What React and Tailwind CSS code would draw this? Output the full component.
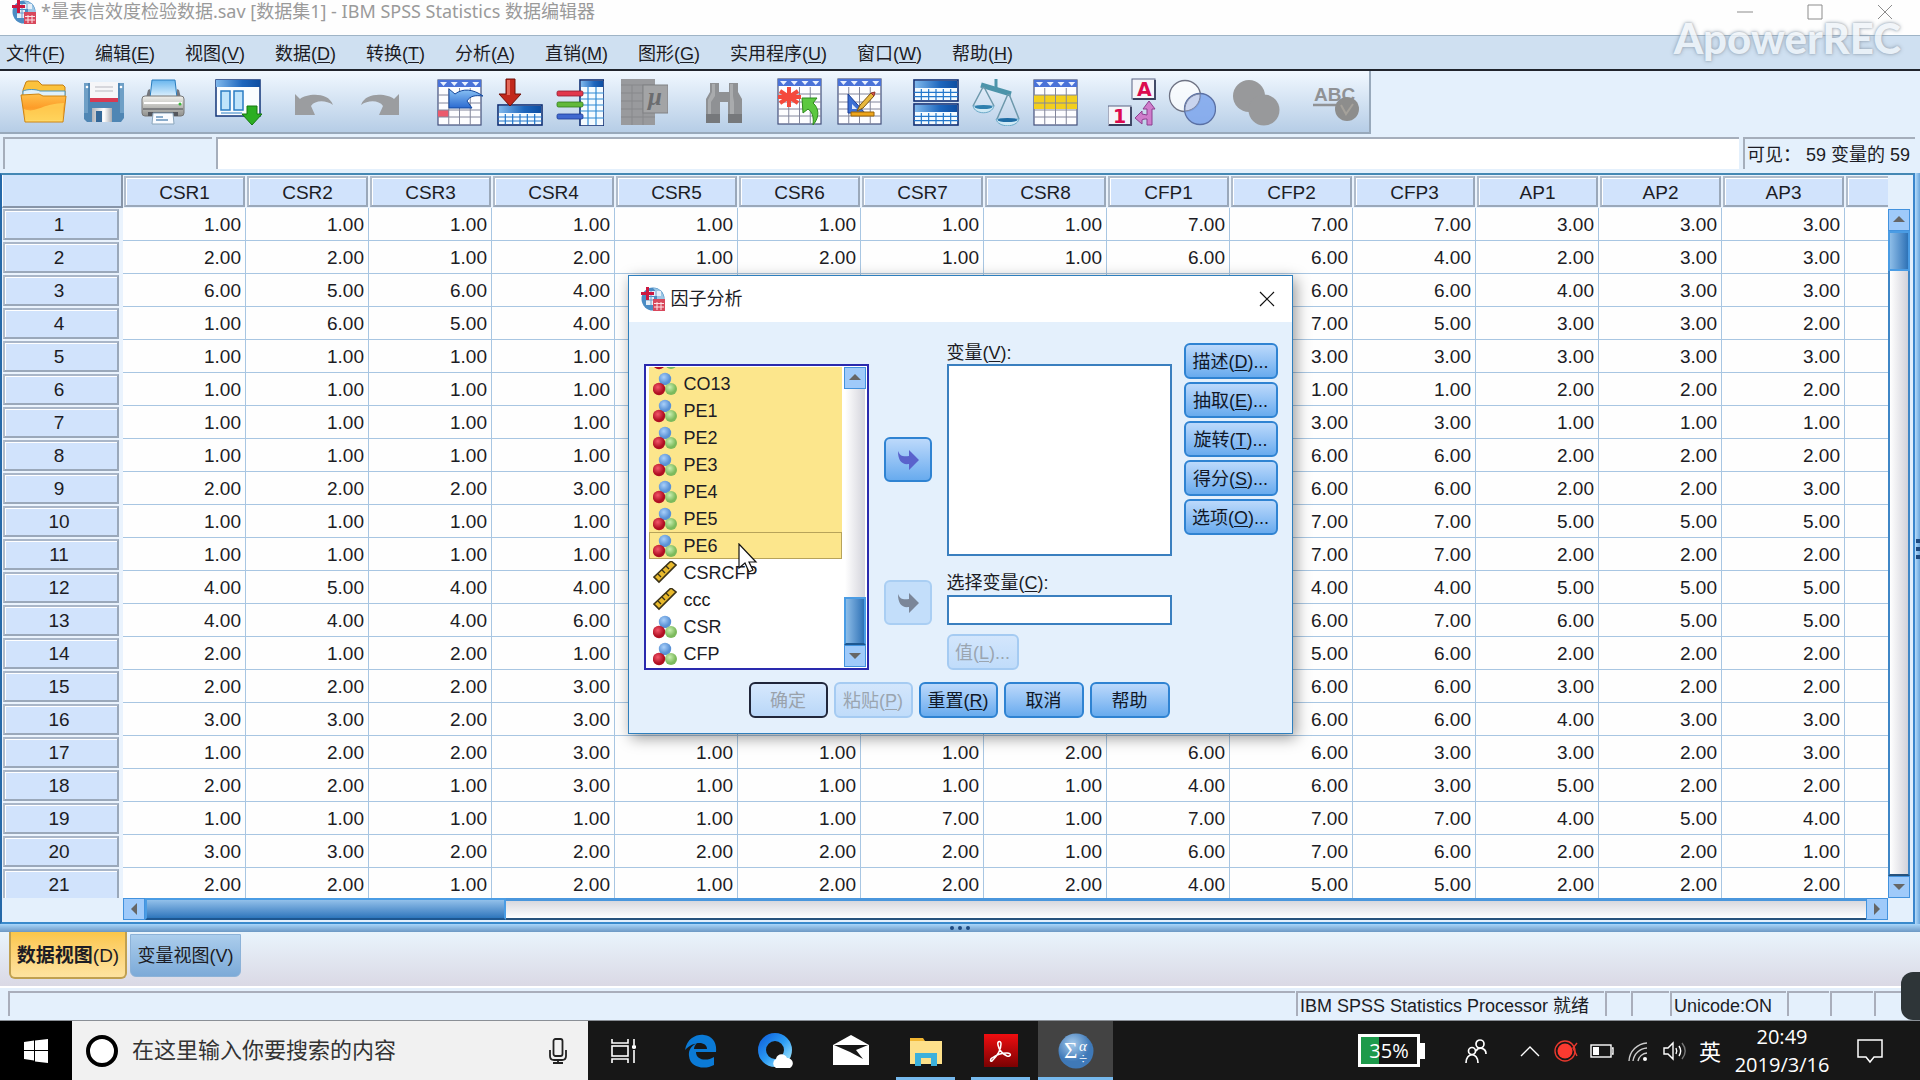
const columns = ["CSR1", "CSR2", "CSR3", "CSR4", "CSR5", "CSR6", "CSR7", "CSR8", "CFP1", "CFP2", "CFP3", "AP1", "AP2", "AP3"]

// null = empty cell
const _ = null
const rows = [
  [1, 1, 1, 1, 1, 1, 1, 1, 7, 7, 7, 3, 3, 3],
  [2, 2, 1, 2, 1, 2, 1, 1, 6, 6, 4, 2, 3, 3],
  [6, 5, 6, 4, _, _, _, _, _, 6, 6, 4, 3, 3],
  [1, 6, 5, 4, _, _, _, _, _, 7, 5, 3, 3, 2],
  [1, 1, 1, 1, _, _, _, _, _, 3, 3, 3, 3, 3],
  [1, 1, 1, 1, _, _, _, _, _, 1, 1, 2, 2, 2],
  [1, 1, 1, 1, _, _, _, _, _, 3, 3, 1, 1, 1],
  [1, 1, 1, 1, _, _, _, _, _, 6, 6, 2, 2, 2],
  [2, 2, 2, 3, _, _, _, _, _, 6, 6, 2, 2, 3],
  [1, 1, 1, 1, _, _, _, _, _, 7, 7, 5, 5, 5],
  [1, 1, 1, 1, _, _, _, _, _, 7, 7, 2, 2, 2],
  [4, 5, 4, 4, _, _, _, _, _, 4, 4, 5, 5, 5],
  [4, 4, 4, 6, _, _, _, _, _, 6, 7, 6, 5, 5],
  [2, 1, 2, 1, _, _, _, _, _, 5, 6, 2, 2, 2],
  [2, 2, 2, 3, _, _, _, _, _, 6, 6, 3, 2, 2],
  [3, 3, 2, 3, _, _, _, _, _, 6, 6, 4, 3, 3],
  [1, 2, 2, 3, 1, 1, 1, 2, 6, 6, 3, 3, 2, 3],
  [2, 2, 1, 3, 1, 1, 1, 1, 4, 6, 3, 5, 2, 2],
  [1, 1, 1, 1, 1, 1, 7, 1, 7, 7, 7, 4, 5, 4],
  [3, 3, 2, 2, 2, 2, 2, 1, 6, 7, 6, 2, 2, 1],
  [2, 2, 1, 2, 1, 2, 2, 2, 4, 5, 5, 2, 2, 2],
]

const menus = [
  ["文件", "F"],
  ["编辑", "E"],
  ["视图", "V"],
  ["数据", "D"],
  ["转换", "T"],
  ["分析", "A"],
  ["直销", "M"],
  ["图形", "G"],
  ["实用程序", "U"],
  ["窗口", "W"],
  ["帮助", "H"],
]

const variables = [
  { name: "CO13", selected: true },
  { name: "PE1", selected: true },
  { name: "PE2", selected: true },
  { name: "PE3", selected: true },
  { name: "PE4", selected: true },
  { name: "PE5", selected: true },
  { name: "PE6", selected: true, focused: true },
  { name: "CSRCFP", scale: true },
  { name: "ccc", scale: true },
  { name: "CSR" },
  { name: "CFP" },
]

function Label({ text, k, after = "" }) {
  return (
    <>
      {text}(<u className="underline-offset-2">{k}</u>){after}
    </>
  )
}

/* ---------- toolbar icons, all in a 48x48 box ---------- */

function Sheet({ x = 2, y = 2, w = 43, h = 45, children }) {
  const cw = w / 4
  return (
    <g>
      <rect x={x} y={y} width={w} height={h} fill="#fdfdff" stroke="#44507c" strokeWidth="1.2" />
      {children}
      <path
        d={`M${x + cw} ${y + 8}V${y + h}M${x + cw * 2} ${y + 8}V${y + h}M${x + cw * 3} ${y + 8}V${y + h}M${x} ${y + 15}H${x + w}M${x} ${y + 23}H${x + w}M${x} ${y + 30}H${x + w}M${x} ${y + 37}H${x + w}`}
        stroke="#82869c"
        strokeWidth="1"
      />
      <rect x={x} y={y} width={w} height="7" fill="#4a72d8" />
      {[0, 1, 2, 3].map((i) => (
        <path key={i} d={`M${x + i * cw + 2} ${y + 2}h7l-3.5 4z`} fill="#e8f0ff" />
      ))}
    </g>
  )
}

function BlueTable({ x, y, w, h }) {
  const cols = [1, 2, 3, 4, 5].map((i) => `M${x + (w * i) / 6} ${y + 9}V${y + h - 1}`).join("")
  const step = (h - 8) / 3
  return (
    <g>
      <rect x={x} y={y} width={w} height={h} fill="#f4fbff" stroke="#0f2f74" strokeWidth="1.6" />
      <path d={`${cols}M${x} ${y + 8 + step}h${w}M${x} ${y + 8 + step * 2}h${w}`} stroke="#2277cc" strokeWidth="1.2" />
      <rect x={x + 1} y={y + 1} width={w - 2} height="7" fill="url(#blueBar)" />
    </g>
  )
}

const icons = {
  open: (
    <>
      <path d="M3 12l3-8 2-1h10l4 4h21l2 2v8H3z" fill="#fbc23c" stroke="#c67e12" />
      <path d="M3 13c4-2 13-2 17 0h25v6H3z" fill="#dff1fb" stroke="#4d94b8" />
      <path d="M1 17l18-1 4 2h23l-3 26H5z" fill="url(#folderFill)" stroke="#cf8410" />
      <path d="M4 31c12 5 16-5 40-6l-2 17H6z" fill="#ffd257" opacity=".8" />
    </>
  ),
  save: (
    <>
      <path d="M4 5h40v35l-3 4H7l-3-3z" fill="#4f86b4" />
      <path d="M4 5h4v30H4zM40 5h4v30h-4z" fill="#6e9fc6" />
      <path d="M10 4h28v20H10z" fill="#f6f6f8" />
      <path d="M15 9h18M15 13h18" stroke="#b8b8c0" />
      <path d="M10 20h28v4H10z" fill="#d83a52" />
      <path d="M12 30h20v14H12z" fill="url(#metal)" />
      <path d="M16 33h6v11h-6z" fill="#346898" />
      <circle cx="7" cy="9" r="1.3" fill="#fff" />
      <circle cx="41" cy="9" r="1.3" fill="#fff" />
    </>
  ),
  print: (
    <>
      <path d="M12 2h23l2 18H10z" fill="url(#paper)" stroke="#2b7dbd" />
      <path d="M8 12l2-1v8h27v-8l2 1 2 8H6z" fill="#74767c" />
      <rect x="2" y="18" width="42" height="20" rx="3" fill="url(#printerFill)" stroke="#777" />
      <path d="M4 25h38" stroke="#fff" strokeWidth="2" />
      <path d="M3 31h40" stroke="#6c6e72" strokeWidth="1.5" />
      <circle cx="40" cy="26" r="1.5" fill="#3cb53c" />
      <path d="M8 34h30v4H8z" fill="#55585e" />
      <path d="M13 35h20l1 11H12z" fill="#f8fbff" stroke="#8aa5bb" />
      <path d="M16 39h7M16 42h12" stroke="#1c5f98" />
    </>
  ),
  recall: (
    <>
      <rect x="2" y="2" width="44" height="36" fill="#fafdff" stroke="#123478" strokeWidth="1.5" />
      <rect x="2" y="2" width="44" height="7" fill="url(#blueBar)" />
      <rect x="7" y="13" width="9" height="19" fill="#bfe4fb" stroke="#2a7cc4" strokeWidth="1.5" />
      <rect x="20" y="13" width="9" height="19" fill="#bfe4fb" stroke="#2a7cc4" strokeWidth="1.5" />
      <path d="M7 35h21" stroke="#2a7cc4" />
      <path d="M33 28h10v8h5L38 47 28 36h5z" fill="#2cae22" stroke="#14780f" />
    </>
  ),
  undo: <path d="M5 16l5 5c6-5 28-8 33 6-7-5-18-5-22 1l4 9H5z" fill="#9b9da0" />,
  redo: <path d="M43 16l-5 5c-6-5-28-8-33 6 7-5 18-5 22 1l-4 9h20z" fill="#9b9da0" />,
  gotoCase: (
    <>
      <Sheet>
        <rect x="2" y="32" width="11" height="7" fill="#ec5a6c" />
      </Sheet>
      <path d="M13 30V11l6 5c8-6 18-5 28 2-8-1-13 0-16 5l5 7z" fill="url(#blueArrow)" stroke="#16489c" />
    </>
  ),
  gotoVar: (
    <>
      <BlueTable x={2} y={27} w={44} h={20} />
      <path d="M10 1h9v15h6L14 28 3 16h7z" fill="#c2281c" stroke="#701008" />
      <path d="M11 2h3v15h-3z" fill="#e4695a" />
    </>
  ),
  variables: (
    <>
      <rect x="24" y="2" width="24" height="46" fill="#f4fbff" stroke="#0f2f74" strokeWidth="1.6" />
      <path d="M32 9v38M40 9v38M24 15h24M24 21h24M24 27h24M24 33h24M24 40h24" stroke="#2f8ad4" strokeWidth="1.2" />
      <rect x="25" y="3" width="22" height="6" fill="url(#blueBar)" />
      <rect x="1" y="13" width="26" height="5" rx="1.5" fill="#e2384c" stroke="#8f1c30" strokeWidth=".8" />
      <rect x="1" y="24" width="26" height="5" rx="1.5" fill="#62b93a" stroke="#2f7a1a" strokeWidth=".8" />
      <rect x="1" y="36" width="26" height="5" rx="1.5" fill="#4068cf" stroke="#1c3a94" strokeWidth=".8" />
    </>
  ),
  stats: (
    <>
      <path d="M1 1h34v46H1z" fill="#999a9d" />
      <path d="M1 7h34M1 15h34M1 23h34M1 31h34M1 39h34M12 7v40M23 7v40" stroke="#87888b" />
      <rect x="23" y="7" width="25" height="28" fill="#a3a4a6" stroke="#808184" />
      <text x="28" y="27" fontSize="25" fontStyle="italic" fontWeight="bold" fill="#6b6c6f" fontFamily="Liberation Serif, serif">μ</text>
    </>
  ),
  find: (
    <>
      <path d="M10 5h9v9h10V5h9v9l4 7v24H28V24h-8v21H6V21l4-7z" fill="#8f9194" />
      <path d="M12 6h3v12l-4 6v12H8V22l4-8zM30 6h3v12l1 6v12h-4z" fill="#a9abad" />
      <path d="M6 36h14v9H6zM28 36h14v9H28z" fill="#76787b" />
    </>
  ),
  insertCase: (
    <>
      <Sheet y={1} />
      <path d="M13 9v20M4 13l18 12M22 13L4 25M2 19h23" stroke="#f4493c" strokeWidth="4" />
      <path d="M26 20h15l-4 5c6 5 7 14 0 22 1-9-1-13-5-16l-5 4z" fill="#5cc840" stroke="#2d8a1c" />
    </>
  ),
  insertVar: (
    <>
      <Sheet y={1} />
      <path d="M12 16v19h17z" fill="#3b6fd4" stroke="#1b3d94" />
      <path d="M16 26v5h5z" fill="#dfe9fa" />
      <path d="M21 33l3-6 11-12 3 3-11 12z" fill="#e8b83c" stroke="#7a5510" />
      <path d="M35 15l3 3 1-4z" fill="#d8584a" stroke="#903428" />
      <path d="M15 34h23v4H15z" fill="#eda51c" stroke="#9a6408" />
    </>
  ),
  split: (
    <>
      <BlueTable x={2} y={2} w={44} h={21} />
      <BlueTable x={2} y={26} w={44} h={21} />
    </>
  ),
  weight: (
    <g fill="none">
      <path d="M24 1v10" stroke="#4c94aa" strokeWidth="3" />
      <path d="M9 7l30 9" stroke="#4c94aa" strokeWidth="5" />
      <path d="M11 9L1 28M12 9l10 19M36 16L25 41M37 16l10 25" stroke="#6d98ab" strokeWidth="1.5" />
      <path d="M1 28h21c-2 9-19 9-21 0z" fill="#cfe9f5" stroke="#6aa9c8" />
      <path d="M24 41h23c-2 9-21 9-23 0z" fill="#cfe9f5" stroke="#6aa9c8" />
      <ellipse cx="11.500" cy="29" rx="9" ry="2" fill="#2e7fae" />
      <ellipse cx="35.500" cy="42" rx="10" ry="2" fill="#1f6ca4" />
    </g>
  ),
  select: (
    <Sheet>
      <rect x="2" y="17" width="43" height="14" fill="#f2cf1e" />
    </Sheet>
  ),
  labels: (
    <>
      <rect x="24" y="1" width="23" height="20" fill="#f4f5fa" stroke="#5a6484" />
      <path d="M25 21h22V2" stroke="#39415e" strokeWidth="1.8" fill="none" />
      <text x="29" y="18" fontSize="19" fontWeight="bold" fill="#dc0a50" fontFamily="DejaVu Sans, sans-serif">A</text>
      <rect x="0" y="28" width="23" height="20" fill="#f4f5fa" stroke="#5a6484" />
      <path d="M1 47h22V29" stroke="#39415e" strokeWidth="1.8" fill="none" />
      <text x="5" y="45" fontSize="19" fontWeight="bold" fill="#dc0a50" fontFamily="DejaVu Sans, sans-serif">1</text>
      <path d="M41 23l6 8h-3v16h-5v-6c-2 0-4 0-5 1v4l-7-6 7-7v3l5 1v-6h-4z" fill="#cf7ccb" stroke="#8b3f8e" />
    </>
  ),
  sets: (
    <>
      <circle cx="17" cy="18" r="15.500" fill="#fff" fillOpacity=".75" stroke="#6f7384" strokeWidth="1.3" />
      <circle cx="32" cy="31" r="15.500" fill="#7ea6ec" fillOpacity=".85" stroke="#5a70a4" strokeWidth="1.3" />
      <path d="M32 16a15.500 15.500 0 01-15 17 15.500 15.500 0 0115-17z" fill="#c9d4ee" stroke="#7b84a0" />
    </>
  ),
  allVars: (
    <>
      <circle cx="17" cy="18" r="16" fill="#98999b" />
      <circle cx="32" cy="32" r="15.500" fill="#98999b" />
    </>
  ),
  spell: (
    <>
      <text x="2" y="23" fontSize="19" fontWeight="bold" fill="#909295" fontFamily="Liberation Sans, sans-serif">ABC</text>
      <path d="M1 27h26" stroke="#909295" strokeWidth="2.500" />
      <circle cx="35" cy="31" r="12" fill="#8d8d8c" />
      <path d="M29 27l5 9 7-10" fill="none" stroke="#a5a19a" strokeWidth="2" />
    </>
  ),
}

function IconDefs() {
  return (
    <svg className="absolute size-0" aria-hidden="true">
      <defs>
        <linearGradient id="blueBar">
          <stop offset="0" stopColor="#7fb8ec" />
          <stop offset=".6" stopColor="#1d66bd" />
          <stop offset="1" stopColor="#0e4ea2" />
        </linearGradient>
        <linearGradient id="folderFill" x2="0" y2="1">
          <stop offset="0" stopColor="#ffc04a" />
          <stop offset=".5" stopColor="#fd9c28" />
          <stop offset="1" stopColor="#ffdf70" />
        </linearGradient>
        <linearGradient id="metal">
          <stop offset="0" stopColor="#b0b4ba" />
          <stop offset=".6" stopColor="#fff" />
          <stop offset="1" stopColor="#a8acb2" />
        </linearGradient>
        <linearGradient id="paper" x2="0" y2="1">
          <stop offset="0" stopColor="#69b6ee" />
          <stop offset="1" stopColor="#e8f6ff" />
        </linearGradient>
        <linearGradient id="printerFill" x2="0" y2="1">
          <stop offset="0" stopColor="#f0f0ec" />
          <stop offset="1" stopColor="#8f908d" />
        </linearGradient>
        <linearGradient id="blueArrow" x2="0" y2="1">
          <stop offset="0" stopColor="#8cc4f6" />
          <stop offset="1" stopColor="#2b6ad0" />
        </linearGradient>
        <linearGradient id="acrobat" x2="0" y2="1">
          <stop offset="0" stopColor="#f00d10" />
          <stop offset="1" stopColor="#7a0203" />
        </linearGradient>
        <radialGradient id="sigma" cx=".4" cy=".3">
          <stop offset="0" stopColor="#a6cbec" />
          <stop offset="1" stopColor="#3f79b8" />
        </radialGradient>
        <radialGradient id="ballBlue" cx=".4" cy=".35">
          <stop offset="0" stopColor="#a9d0fa" />
          <stop offset="1" stopColor="#5a92d6" />
        </radialGradient>
        <radialGradient id="ballRed" cx=".4" cy=".35">
          <stop offset="0" stopColor="#f3566a" />
          <stop offset="1" stopColor="#b00f22" />
        </radialGradient>
        <radialGradient id="ballGreen" cx=".4" cy=".35">
          <stop offset="0" stopColor="#c9efb0" />
          <stop offset="1" stopColor="#7cba5c" />
        </radialGradient>
        <linearGradient id="qRing" x2="1" y2="1">
          <stop offset="0" stopColor="#1267e0" />
          <stop offset=".5" stopColor="#2b9cf4" />
          <stop offset="1" stopColor="#9be0fb" />
        </linearGradient>
      </defs>
    </svg>
  )
}

function Tool({ icon, label }) {
  return (
    <button aria-label={label} className="w-[60px] h-full flex items-center justify-center">
      <svg viewBox="0 0 48 48" className="size-12">{icons[icon]}</svg>
    </button>
  )
}

function SpssLogo() {
  return (
    <svg viewBox="0 0 24 24" className="size-6 shrink-0">
      <circle cx="12" cy="12" r="11.500" fill="#4b8cc4" />
      <path d="M12 1a11 11 0 0111 11h-7V6z" fill="#9cc7e6" />
      <path d="M6 4h14v5H6zM5 10h8v8H5z" fill="#e6eff8" />
      <path d="M10 4v14M5 13h8M15 4v5" stroke="#6d9cc8" />
      <path d="M5 0h3v5h5v3H8v5H5V8H0V5h5z" fill="#cc1840" />
      <rect x="12" y="12" width="12" height="12" fill="#d8485c" />
      <path d="M13 16.500h10M13 20h10M16 15v8M20 15v8" stroke="#fbe4e8" />
    </svg>
  )
}

function NominalIcon() {
  return (
    <svg viewBox="0 0 24 24" className="size-6 shrink-0">
      <circle cx="12" cy="7" r="6.200" fill="url(#ballBlue)" />
      <circle cx="18" cy="17" r="6" fill="url(#ballGreen)" />
      <circle cx="6" cy="17" r="6.200" fill="url(#ballRed)" />
    </svg>
  )
}

function ScaleIcon() {
  return (
    <svg viewBox="0 0 24 24" className="size-6 shrink-0">
      <path d="M1 16L18 0l5 4L6 21z" fill="#e8b92c" stroke="#3c3318" strokeWidth="1.600" />
      <path d="M5 13l3 3M9 9l3 3M13 5l3 3" stroke="#3c3318" strokeWidth="1.400" />
    </svg>
  )
}

/* ---------- scroll bars ---------- */

const triangles = {
  up: "M1 9l6-6 6 6z",
  down: "M1 4h12L7 10z",
  left: "M10 1v12L4 7z",
  right: "M4 1v12l6-6z",
}

function ScrollButton({ dir }) {
  return (
    <button aria-label={dir} className="size-[22px] shrink-0 flex items-center justify-center bg-[#9fcafa] border border-[#4292de]">
      <svg viewBox="0 0 14 14" className="size-3.5">
        <path d={triangles[dir]} fill="#666" />
      </svg>
    </button>
  )
}

/* ---------- factor analysis dialog ---------- */

function DialogButton({ children, disabled, primary, className = "" }) {
  const tone = primary
    ? "border-[#20263a] bg-linear-to-b from-[#d6e8fd] to-[#b9d7f8] text-[#9aa2ab]"
    : disabled
      ? "border-[#a5cbf2] bg-linear-to-b from-[#d3e6fc] to-[#c0dcfa] text-[#9aa5b0]"
      : "border-[#2f83d2] bg-linear-to-b from-[#bcd9fb] to-[#68abee] text-[#101828]"
  return (
    <button disabled={disabled} className={`h-9 pt-[3px] rounded-md border-2 text-lg leading-[29px] whitespace-nowrap ${tone} ${className}`}>
      {children}
    </button>
  )
}

function MoveButton({ disabled }) {
  return (
    <button
      disabled={disabled}
      aria-label="移动"
      className={
        disabled
          ? "w-12 h-[45px] rounded-md border-2 border-[#a9cef3] bg-[#c3defa] flex items-center justify-center"
          : "w-12 h-[45px] rounded-md border-2 border-[#2f83d2] bg-linear-to-b from-[#bcd9fb] to-[#68abee] flex items-center justify-center"
      }
    >
      <svg viewBox="0 0 22 20" className="w-[22px] h-5">
        <path d="M1 1c2 5 5 6 11 5V0l10 10-10 10v-6C5 15 1 11 1 1z" fill={disabled ? "#7b8698" : "#5a62cc"} />
      </svg>
    </button>
  )
}

function FactorDialog() {
  return (
    <section
      role="dialog"
      aria-label="因子分析"
      className="relative w-[665px] border border-[#2f7fbd] bg-[#e4f0fc] shadow-[3px_4px_14px_rgba(0,0,0,0.4)]"
    >
      <header className="h-[46px] bg-white flex items-center pl-3 pr-[17px]">
        <SpssLogo />
        <h2 className="ml-1.5 text-lg">因子分析</h2>
        <button aria-label="关闭" className="ml-auto">
          <svg viewBox="0 0 16 16" className="size-4">
            <path d="M1 1l14 14M15 1L1 15" stroke="#111" strokeWidth="1.200" />
          </svg>
        </button>
      </header>

      <div className="flex pl-[15px] pr-[14px]">
        {/* source variables */}
        <div className="mt-[42px] h-[306px] w-[225px] border-2 border-[#2a2aae] bg-white flex">
          <ul role="listbox" aria-multiselectable="true" className="flex-1 ml-[3px] mt-px mr-0.5">
            {/* tail of the row scrolled out above */}
            <li aria-hidden="true" className="h-[3px] pl-1 overflow-hidden flex items-end bg-[#fce68c]">
              <NominalIcon />
            </li>
            {variables.map((v) => (
              <li
                key={v.name}
                role="option"
                aria-selected={!!v.selected}
                className={`h-[27px] pl-[3px] flex items-center gap-[7px] text-lg border ${v.selected ? "bg-[#fce68c]" : "bg-white"} ${v.focused ? "border-[#b7a35a]" : "border-transparent"}`}
              >
                {v.scale ? <ScaleIcon /> : <NominalIcon />}
                {v.name}
              </li>
            ))}
          </ul>
          <div className="flex flex-col w-[22px] mr-px my-px">
            <ScrollButton dir="up" />
            <div className="h-[208px] mx-px bg-linear-to-r from-white to-[#d4d4dc]" />
            <div className="flex-1 border-2 border-[#4a9ce4] border-b-[#1d5791] bg-linear-to-r from-[#8dbde8] to-[#2d72b6]" />
            <ScrollButton dir="down" />
          </div>
        </div>

        <div className="ml-[15px] pt-[115px] flex flex-col gap-[98px]">
          <MoveButton />
          <MoveButton disabled />
        </div>

        <div className="ml-[15px] pt-[21px] w-[225px] flex flex-col">
          <label htmlFor="target" className="text-lg leading-[21px]">
            <Label text="变量" k="V" after=":" />
          </label>
          <select id="target" multiple className="h-48 w-full appearance-none bg-white border-2 border-[#3a7fbf]" />
          <label htmlFor="selection" className="mt-4 text-lg leading-[23px]">
            <Label text="选择变量" k="C" after=":" />
          </label>
          <input id="selection" type="text" className="h-[30px] w-full bg-white border-2 border-[#3a7fbf] px-1 text-lg" />
          <DialogButton disabled className="mt-[9px] w-[72px]">
            <Label text="值" k="L" after="..." />
          </DialogButton>
        </div>

        <div className="ml-3 pt-[21px] flex-1 flex flex-col gap-[3px]">
          {[["描述", "D"], ["抽取", "E"], ["旋转", "T"], ["得分", "S"], ["选项", "O"]].map(([text, k]) => (
            <DialogButton key={k}>
              <Label text={text} k={k} after="..." />
            </DialogButton>
          ))}
        </div>
      </div>

      <div className="flex justify-center gap-1.5 pt-3 pb-[15px] pr-0.5">
        <DialogButton disabled primary className="w-[79px]">确定</DialogButton>
        <DialogButton disabled className="w-[79px]"><Label text="粘贴" k="P" /></DialogButton>
        <DialogButton className="w-[79px]"><Label text="重置" k="R" /></DialogButton>
        <DialogButton className="w-20">取消</DialogButton>
        <DialogButton className="w-20">帮助</DialogButton>
      </div>

      {/* mouse pointer */}
      <svg viewBox="0 0 20 30" className="absolute left-[109px] top-[267px] w-5 h-[30px]">
        <path d="M1 1v24l6-5 4 9 4-2-4-8h7z" fill="#fff" stroke="#111" strokeWidth="1.200" />
      </svg>
    </section>
  )
}

/* ---------- taskbar ---------- */

function TaskApp({ label, running, active, children }) {
  return (
    <button
      aria-label={label}
      className={`relative w-[75px] h-full flex items-center justify-center ${active ? "bg-[#434343]" : ""}`}
    >
      <svg viewBox="0 0 36 36" className="size-9">{children}</svg>
      {running && <span className="absolute bottom-0 inset-x-2 h-[3px] bg-[#76b9ed]" />}
      {active && <span className="absolute bottom-0 inset-x-0 h-[3px] bg-[#76b9ed]" />}
    </button>
  )
}

function TrayIcon({ label, children }) {
  return (
    <button aria-label={label} className="w-9 flex items-center justify-center">
      <svg viewBox="0 0 24 24" className="size-6" fill="none" stroke="#fff" strokeWidth="1.400">{children}</svg>
    </button>
  )
}

function Taskbar() {
  return (
    <footer className="h-[59px] bg-[#171717] text-white flex items-stretch">
      <button aria-label="开始" className="w-[72px] bg-black flex items-center justify-center">
        <svg viewBox="0 0 24 24" className="size-6" fill="#fff">
          <path d="M0 3l10-1.500V11H0zM11 1.400L24 0v11H11zM0 12h10v9.500L0 20zM11 12h13v12l-13-1.600z" />
        </svg>
      </button>
      <label className="w-[516px] bg-[#f1f1f1] flex items-center pl-[13px] pr-5">
        <svg viewBox="0 0 34 34" className="size-[34px]">
          <circle cx="17" cy="17" r="14" fill="#fff" stroke="#000" strokeWidth="4" />
        </svg>
        <input
          type="text"
          aria-label="搜索"
          placeholder="在这里输入你要搜索的内容"
          className="ml-[13px] flex-1 min-w-0 bg-transparent text-[22px] placeholder:text-[#333] outline-none"
        />
        <svg viewBox="0 0 20 26" className="w-5 h-[26px]" fill="none" stroke="#222" strokeWidth="1.800">
          <rect x="5.500" y="1" width="9" height="17" rx="2" />
          <path d="M2 12v6c0 3 2 4 4 4h8c2 0 4-1 4-4v-6M10 22v3M5 25h10" />
        </svg>
      </label>
      <button aria-label="任务视图" className="w-[72px] mr-[3px] flex items-center justify-center">
        <svg viewBox="0 0 28 26" className="w-7 h-[26px]" fill="none" stroke="#fff" strokeWidth="1.600">
          <path d="M2 1v4h16V1M2 25v-4h16v4" />
          <rect x="2" y="8" width="16" height="10" />
          <path d="M24 1v6M24 12v13M24 7v4" />
          <path d="M22 9h4" strokeWidth="3" />
        </svg>
      </button>

      <TaskApp label="Edge">
        <path d="M2 17C4 5 14 1 21 2c9 1 13 8 12 17H13c0 9 12 9 18 5v8c-9 5-24 3-25-9-1-7 4-11 8-13-2 2-3 4-3 6h13c0-7-12-9-22 1z" fill="#0b7ad6" />
      </TaskApp>
      <TaskApp label="QQ浏览器">
        <circle cx="17" cy="17" r="13" fill="none" stroke="url(#qRing)" strokeWidth="8" />
        <path d="M18 35a5 5 0 010-9c1-6 9-6 11-1 6 0 8 7 3 10z" fill="#fff" />
      </TaskApp>
      <TaskApp label="邮件">
        <path d="M0 12L18 2l18 10v20H0z" fill="#fff" />
        <path d="M1 12h34L23 17l7 9-13-7z" fill="#171717" />
      </TaskApp>
      <TaskApp label="文件资源管理器" running>
        <path d="M2 5h13l2 3H2z" fill="#f2b632" />
        <path d="M2 8h32v23H2z" fill="#fde08a" />
        <path d="M7 33V20h22v13h-6v-8h-10v8z" fill="#3cb0dc" />
      </TaskApp>
      <TaskApp label="Acrobat" running>
        <rect x="1" y="1" width="34" height="33" fill="url(#acrobat)" />
        <path d="M9 28c3-3 9-9 9-17 0-4-4-3-3 1 1 5 5 9 9 11 4 1 5-3 0-3-5 0-11 2-15 5-2 1-2 4 0 3z" fill="none" stroke="#fff" strokeWidth="1.500" />
      </TaskApp>
      <TaskApp label="SPSS" active>
        <circle cx="18" cy="18" r="17.500" fill="url(#sigma)" />
        <text x="6" y="25" fontSize="23" fill="#fff" fontFamily="Liberation Serif, serif">Σ</text>
        <text x="21" y="18" fontSize="15" fontStyle="italic" fill="#fff" fontFamily="Liberation Serif, serif">α</text>
        <text x="21" y="31" fontSize="15" fill="#fff" fontFamily="Liberation Serif, serif">÷</text>
      </TaskApp>

      {/* tray */}
      <div className="ml-auto flex items-stretch pr-4">
        <div className="flex items-center mr-[15px]">
          <div className="relative w-[62px] h-[33px] border-[3px] border-white bg-[#151515] bg-linear-to-r from-[#1d9a4b] from-33% to-[#151515] to-33% flex items-center justify-center">
            <span className="text-xl font-['Open_Sans']">35%</span>
          </div>
          <span className="w-[5px] h-4 bg-white" />
        </div>
        <button aria-label="人脉" className="w-[72px] flex items-center justify-center">
          <svg viewBox="0 0 24 26" className="w-6 h-[26px]" fill="none" stroke="#fff" strokeWidth="1.700">
            <circle cx="16" cy="6" r="4" />
            <circle cx="8" cy="13" r="3.500" />
            <path d="M2 25c0-11 12-11 12 0M12 13c3-5 10-3 10 3" />
          </svg>
        </button>
        <TrayIcon label="显示隐藏的图标"><path d="M3 17l9-9 9 9" /></TrayIcon>
        <TrayIcon label="录屏">
          <circle cx="11" cy="12" r="10" stroke="#e8392e" />
          <circle cx="11" cy="12" r="7.500" fill="#fb3a30" stroke="none" />
          <path d="M23 4l-4 5 4 8" stroke="#e8392e" />
        </TrayIcon>
        <TrayIcon label="电池">
          <rect x="1" y="6" width="20" height="12" />
          <path d="M22 9h1v6h-1" />
          <rect x="3" y="8" width="6" height="8" fill="#fff" stroke="none" />
        </TrayIcon>
        <TrayIcon label="网络">
          <path d="M3 22A19 19 0 0121 4M7 22A15 15 0 0121 9M12 22a10 10 0 019-8" stroke="#ccc" />
          <circle cx="19" cy="20" r="2" fill="#fff" stroke="none" />
        </TrayIcon>
        <TrayIcon label="音量">
          <path d="M2 9h4l5-5v16l-5-5H2z" />
          <path d="M14 9c1 2 1 4 0 6M17 7c2 3 2 7 0 10" />
          <path d="M20 4c4 5 4 11 0 16" stroke="#777" />
        </TrayIcon>
        <button className="w-9 text-[22px] font-['Noto_Sans_CJK_SC']">英</button>
        <div className="w-[108px] flex flex-col justify-center text-center text-xl leading-7 font-['Open_Sans',sans-serif]">
          <time>20:49</time>
          <time>2019/3/16</time>
        </div>
        <button aria-label="通知" className="w-[68px] flex items-center justify-center">
          <svg viewBox="0 0 26 26" className="size-[26px]" fill="none" stroke="#fff" strokeWidth="1.500">
            <path d="M1 2h24v17h-8l-4 5-4-5H1z" />
          </svg>
        </button>
      </div>
    </footer>
  )
}

function App() {
  return (
    <div className="relative min-h-screen flex flex-col overflow-hidden bg-[#e4f0fc] text-[#1c1c24] font-['Liberation_Sans','Noto_Sans_CJK_SC',sans-serif]">
      <IconDefs />

      {/* title bar */}
      <header className="h-[35px] bg-[#fefefe] flex items-start pl-3 text-[#9a9a9a]">
        <SpssLogo />
        <h1 className="ml-[5px] text-lg leading-[22px] font-['Noto_Sans','Noto_Sans_CJK_SC',sans-serif]">
          *量表信效度检验数据.sav [数据集1] - IBM SPSS Statistics 数据编辑器
        </h1>
        <div className="ml-auto flex gap-[54px] pt-1 pr-[27px]">
          {["M0 8h16", "M1 1h14v14H1z", "M1 1l14 14M15 1L1 15"].map((d) => (
            <button key={d} aria-label="窗口按钮">
              <svg viewBox="0 0 16 16" className="size-4">
                <path d={d} fill="none" stroke="#8c8c8c" />
              </svg>
            </button>
          ))}
        </div>
      </header>

      {/* menu */}
      <nav className="h-9 pt-0.5 bg-[#cfe0f1] border-t border-[#9fb4c6] border-b-2 border-b-[#20242c] flex items-center gap-[30px] pl-1.5 text-lg">
        {menus.map(([text, k]) => (
          <button key={k} className="whitespace-nowrap"><Label text={text} k={k} /></button>
        ))}
      </nav>
      <div className="absolute right-[19px] top-[14px] text-[42px] leading-12 font-black text-[#eff4f9] opacity-80 font-['Lato',sans-serif] [text-shadow:0_0_4px_#8d9baa,0_0_2px_#8d9baa]">
        ApowerREC
      </div>

      {/* toolbar */}
      <div className="flex">
        <div className="h-[63px] w-[1371px] flex items-center pl-3.5 bg-linear-to-b from-[#f1f8ff] to-[#b6cde6] border-r-2 border-b-2 border-[#98a9bb]">
          <Tool icon="open" label="打开" />
          <Tool icon="save" label="保存" />
          <Tool icon="print" label="打印" />
          <div className="ml-3.5"><Tool icon="recall" label="调用对话框" /></div>
          <div className="ml-4 flex gap-1.5">
            <Tool icon="undo" label="撤消" />
            <Tool icon="redo" label="重做" />
          </div>
          <div className="ml-5 flex">
            <Tool icon="gotoCase" label="转至个案" />
            <Tool icon="gotoVar" label="转至变量" />
            <Tool icon="variables" label="变量" />
          </div>
          <div className="ml-1"><Tool icon="stats" label="描述统计" /></div>
          <div className="ml-5"><Tool icon="find" label="查找" /></div>
          <div className="ml-4 flex">
            <Tool icon="insertCase" label="插入个案" />
            <Tool icon="insertVar" label="插入变量" />
          </div>
          <div className="ml-4 flex">
            <Tool icon="split" label="拆分文件" />
            <Tool icon="weight" label="加权个案" />
            <Tool icon="select" label="选择个案" />
          </div>
          <div className="ml-4 flex">
            <Tool icon="labels" label="值标签" />
            <Tool icon="sets" label="使用变量集" />
          </div>
          <div className="ml-1"><Tool icon="allVars" label="显示所有变量" /></div>
          <div className="ml-5"><Tool icon="spell" label="拼写检查" /></div>
        </div>
      </div>

      {/* cell editor */}
      <div className="h-[39px] flex items-start gap-1 pl-[3px] pt-[3px] pr-[5px]">
        <div className="w-[209px] h-8 border-t-2 border-l-2 border-[#a5aebb]" />
        <input type="text" aria-label="单元格" className="flex-1 min-w-0 h-8 bg-white border-t-2 border-l-2 border-[#a5aebb] px-1" />
        <div className="w-[172px] h-8 border-t-2 border-l-2 border-[#a5aebb] pl-0.5 leading-[33px] text-lg whitespace-pre">可见： 59 变量的 59</div>
      </div>

      {/* data grid */}
      <div className="flex-1 flex min-h-0">
        <div className="flex-1 min-w-0 flex flex-col border-2 border-t-[#4488b4] border-l-[#2468a8] border-r-[#3a86cc] border-b-[#3a8acc]">
          <div className="flex">
            <div className="flex-1 min-w-0 h-[723px] overflow-hidden">
              <table className="w-full table-fixed border-separate border-spacing-0 text-[19px]">
                <colgroup>
                  <col className="w-[121px]" />
                  {columns.map((c) => <col key={c} className="w-[123px]" />)}
                  <col />
                </colgroup>
                <thead>
                  <tr className="h-[33px]">
                    <td className="p-0 bg-[#d0e3fb] border-l border-white border-r-2 border-b-2 border-r-[#8795a8] border-b-[#8795a8]" />
                    {columns.map((c) => (
                      <th key={c} scope="col" className="p-px bg-[#eaf3fd] font-normal">
                        <div className="h-[31px] leading-[29px] border-2 border-[#9aa8ba] border-t-[#b0bccb] border-l-[#b0bccb] bg-[#d1e3fc] inset-shadow-[1px_1px_0_white]">{c}</div>
                      </th>
                    ))}
                    <td className="p-px pr-0 bg-[#eaf3fd]">
                      <div className="h-[31px] border-2 border-r-0 border-[#9aa8ba] border-t-[#b0bccb] border-l-[#b0bccb] bg-[#d1e3fc] inset-shadow-[1px_1px_0_white]" />
                    </td>
                  </tr>
                </thead>
                <tbody>
                  {rows.map((row, i) => (
                    <tr key={i} className="h-[33px]">
                      <th scope="row" className="p-0 pl-px pr-1 bg-[#eaf3fd] font-normal align-top">
                        <div className="h-[31px] mt-px leading-[28px] pr-1 border-2 border-[#9aa8ba] border-t-[#a9b6c8] border-l-[#b0bccb] bg-[#d1e3fc] inset-shadow-[1px_1px_0_white]">{i + 1}</div>
                      </th>
                      {row.map((v, j) => (
                        <td key={j} className="p-0 pt-0.5 pr-1 leading-6 bg-[#fefefe] text-right border-r border-b border-[#a8c6e2]">
                          {v === null ? "" : v.toFixed(2)}
                        </td>
                      ))}
                      <td className="p-0 bg-[#fefefe] border-b border-[#a8c6e2]" />
                    </tr>
                  ))}
                </tbody>
              </table>
            </div>
            {/* vertical scroll bar */}
            <div className="w-[22px] mr-[3px] pt-[34px] flex flex-col">
              <ScrollButton dir="up" />
              <div className="h-10 border-2 border-[#4a9ce4] bg-linear-to-r from-[#8dbde8] to-[#2d72b6]" />
              <div className="flex-1 border-x-2 border-x-[#3f86c6] border-b-2 border-b-[#27527c] bg-linear-to-r from-white to-[#d2d2da]" />
              <ScrollButton dir="down" />
            </div>
          </div>
          {/* horizontal scroll bar */}
          <div className="h-[22px] ml-[121px] mr-[25px] flex">
            <ScrollButton dir="left" />
            <div className="w-[361px] border-2 border-[#4a9ce4] border-b-[#1d5791] bg-linear-to-b from-[#92c0ea] to-[#2d76bc]" />
            <div className="flex-1 border-t-[3px] border-b-2 border-t-[#4a96dc] border-b-[#27527c] bg-linear-to-b from-[#d8d8de] to-white" />
            <ScrollButton dir="right" />
          </div>
        </div>
        {/* right split handle */}
        <div className="w-[5px] bg-linear-to-r from-[#b5dcfb] to-[#6ba6dc] flex flex-col items-center justify-center gap-1">
          {[0, 1, 2].map((i) => <span key={i} className="size-1 bg-[#1d4a80]" />)}
        </div>
      </div>

      {/* bottom split handle */}
      <div className="h-2 bg-linear-to-b from-[#a9d6fa] to-[#6c98c4] flex items-center justify-center gap-1">
        {[0, 1, 2].map((i) => <span key={i} className="size-1 rounded-full bg-[#1d4a80]" />)}
      </div>

      {/* view tabs */}
      <div className="h-14 bg-linear-to-b from-[#e9f4fc] to-[#dad9e5] border-b-2 border-white flex items-start gap-[3px] pl-[9px]">
        <button className="h-[47px] w-[118px] pt-1 rounded-b-md border-2 border-t-0 border-[#c0a050] bg-linear-to-b from-[#fbc648] to-[#fee3a0] text-[19px] whitespace-nowrap">
          <b>数据视图</b>(D)
        </button>
        <button className="mt-0.5 h-[43px] w-[111px] rounded-b-md border border-[#8cb2d8] bg-linear-to-b from-[#abcdec] to-[#7caad8] text-lg whitespace-nowrap">
          变量视图(V)
        </button>
      </div>

      {/* status bar */}
      <div className="h-[33px] pt-[3px] pl-2 pb-1 flex gap-px border-b border-[#8a8f96] text-lg">
        {[
          ["flex-1", ""],
          ["w-[308px]", "IBM SPSS Statistics Processor 就绪"],
          ["w-[25px]", ""],
          ["w-[38px]", ""],
          ["w-[116px]", "Unicode:ON"],
          ["w-[42px]", ""],
          ["w-[43px]", ""],
          ["w-[46px]", ""],
        ].map(([w, text], i) => (
          <div key={i} className={`${w} border-t-2 border-l-2 border-[#a9aebb] pl-0.5 leading-[27px] whitespace-nowrap`}>{text}</div>
        ))}
      </div>
      <div className="absolute right-0 bottom-[60px] w-[19px] h-12 rounded-l-xl bg-[#2e3538]" />

      <Taskbar />

      <div className="absolute inset-x-0 top-[275px] flex justify-center">
        <FactorDialog />
      </div>
    </div>
  )
}

export default App
